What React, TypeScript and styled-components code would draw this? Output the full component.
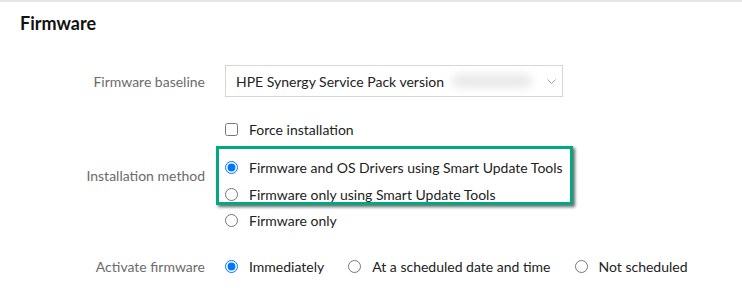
import styled, { createGlobalStyle } from "styled-components";

const GlobalStyle = createGlobalStyle`
  body {
    margin: 0;
    background: #ffffff;
    font-family: "Lato", "Noto Sans", sans-serif;
    color: #333333;
  }
`;

const Page = styled.div`
  border-top: 2px solid #e5e5e5;
  width: 742px;
  height: 304px;
  box-sizing: border-box;
`;

const Title = styled.h2`
  margin: 0;
  padding: 11px 0 0 20px;
  font-size: 18px;
  font-weight: 700;
  color: #111111;
  line-height: 20px;
`;

const Form = styled.div`
  display: grid;
  grid-template-columns: 205px 1fr;
  column-gap: 20px;
  margin-top: 32px;
`;

const Label = styled.div`
  text-align: right;
  font-size: 14px;
  color: #6b6b6b;
  align-self: center;
`;

const Field = styled.div`
  display: flex;
  flex-direction: column;
`;

const Select = styled.div`
  width: 338px;
  height: 32px;
  box-sizing: border-box;
  border: 1px solid #d6d6d6;
  display: flex;
  align-items: center;
  padding: 0 6px 0 10px;
  font-size: 14px;
  color: #222;
`;

const Blur = styled.span`
  display: inline-block;
  width: 80px;
  height: 14px;
  margin-left: 8px;
  border-radius: 7px;
  background: #e9e9e9;
  filter: blur(4px);
`;

const Chevron = styled.svg`
  margin-left: auto;
`;

const Option = styled.label<{ compact?: boolean }>`
  display: flex;
  align-items: center;
  height: ${(p) => (p.compact ? 16 : 27)}px;
  font-size: 14px;
  color: #222;
  gap: 11px;
  white-space: nowrap;
  input {
    margin: 0;
    width: 13px;
    height: 13px;
  }
`;

const Highlight = styled.div`
  margin: 3px 0 2px -9px;
  width: 357px;
  box-sizing: border-box;
  border: 3px solid #01a982;
  box-shadow: 2px 2px 3px rgba(0, 0, 0, 0.6);
  padding: 10px 0 0 6px;
  display: flex;
  flex-direction: column;
  gap: 11px;
`;

const Inline = styled.div`
  display: flex;
  align-items: center;
  gap: 24px;
  height: 30px;
`;

const Spacer = styled.div<{ h: number }>`
  grid-column: 1 / -1;
  height: ${(p) => p.h}px;
`;

export default function App() {
  return (
    <>
      <GlobalStyle />
      <Page>
        <Title>Firmware</Title>
        <Form>
          <Label>Firmware baseline</Label>
          <Select>
            HPE Synergy Service Pack version
            <Blur />
            <Chevron width="9" height="5" viewBox="0 0 9 5">
              <path d="M0.5 0.5l4 4 4-4" fill="none" stroke="#a0a0a0" strokeWidth="1" />
            </Chevron>
          </Select>
          <Spacer h={19} />
          <Label>Installation method</Label>
          <Field>
            <Option>
              <input type="checkbox" />
              Force installation
            </Option>
            <Highlight>
              <Option compact>
                <input type="radio" name="method" defaultChecked />
                Firmware and OS Drivers using Smart Update Tools
              </Option>
              <Option compact>
                <input type="radio" name="method" />
                Firmware only using Smart Update Tools
              </Option>
            </Highlight>
            <Option>
              <input type="radio" name="method" />
              Firmware only
            </Option>
          </Field>
          <Spacer h={17} />
          <Label>Activate firmware</Label>
          <Inline>
            <Option>
              <input type="radio" name="activate" defaultChecked />
              Immediately
            </Option>
            <Option>
              <input type="radio" name="activate" />
              At a scheduled date and time
            </Option>
            <Option>
              <input type="radio" name="activate" />
              Not scheduled
            </Option>
          </Inline>
        </Form>
      </Page>
    </>
  );
}
